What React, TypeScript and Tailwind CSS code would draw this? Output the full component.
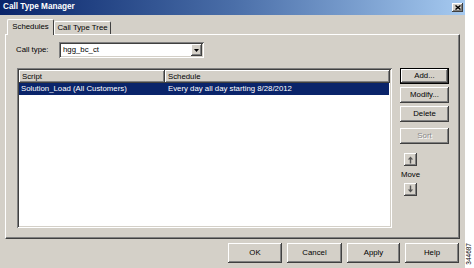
import React from "react";

const raised =
  "shadow-[inset_-1px_-1px_#404040,inset_1px_1px_#ffffff,inset_-2px_-2px_#808080,inset_2px_2px_#d4d0c8]";
const sunken =
  "shadow-[inset_1px_1px_#808080,inset_-1px_-1px_#ffffff,inset_2px_2px_#404040,inset_-2px_-2px_#d4d0c8]";

function Btn({
  label,
  w = "w-[49px]",
  h = "h-[16px]",
  disabled = false,
  def = false,
}: {
  label: string;
  w?: string;
  h?: string;
  disabled?: boolean;
  def?: boolean;
}) {
  return (
    <div
      className={`${w} ${h} bg-[#d4d0c8] flex items-center justify-center ${
        def
          ? "border border-black shadow-[inset_-1px_-1px_#404040,inset_1px_1px_#ffffff,inset_-2px_-2px_#808080]"
          : raised
      } ${disabled ? "text-[#8a8a8a] [text-shadow:1px_1px_#ffffff]" : "text-black"}`}
    >
      {label}
    </div>
  );
}

function ArrowBtn({ up }: { up: boolean }) {
  return (
    <div className={`w-[13px] h-[13px] bg-[#d4d0c8] flex items-center justify-center ${raised}`}>
      <svg width="7" height="8" viewBox="0 0 7 8">
        {up ? (
          <path d="M3.5 0.5 L0.8 3.6 H2.8 V7.5 H4.2 V3.6 H6.2 Z" fill="#555" />
        ) : (
          <path d="M3.5 7.5 L0.8 4.4 H2.8 V0.5 H4.2 V4.4 H6.2 Z" fill="#555" />
        )}
      </svg>
    </div>
  );
}

export default function App() {
  return (
    <div
      className="w-[474px] h-[268px] bg-white flex overflow-hidden text-[7.8px] leading-none text-black"
      style={{ fontFamily: '"Liberation Sans", Arial, sans-serif' }}
    >
      <div className="w-[465px] h-full bg-[#d4d0c8] flex flex-col">
        {/* Title bar */}
        <div className="h-[15px] bg-linear-to-r from-[#0a246a] via-[#4a6ea8] to-[#a6caf0] flex items-center justify-between pl-[3px] pr-[2px] shrink-0">
          <span className="text-white font-bold text-[8.2px]">Call Type Manager</span>
          <div className={`w-[11px] h-[9px] bg-[#d4d0c8] flex items-center justify-center ${raised}`}>
            <svg width="6" height="5" viewBox="0 0 6 5">
              <path d="M0.5 0.5 L5.5 4.5 M5.5 0.5 L0.5 4.5" stroke="#000" strokeWidth="1.4" />
            </svg>
          </div>
        </div>

        <div className="flex flex-col px-[5px] pt-[4px]">
          {/* Tabs */}
          <div className="h-[15px] flex items-end pl-[2px]">
            <div className="relative z-10 -mb-px h-[16px] w-[47px] bg-[#d4d0c8] border-t border-l border-white border-r border-r-[#404040] rounded-t-[2px] flex items-center justify-center pb-[1px]">
              Schedules
            </div>
            <div className="h-[13px] w-[57px] bg-[#d4d0c8] border-t border-l border-white border-r border-r-[#404040] rounded-t-[2px] flex items-center justify-center">
              Call Type Tree
            </div>
          </div>

          {/* Panel */}
          <div className="h-[205px] border-t border-l border-white border-b border-r border-b-[#404040] border-r-[#404040] shadow-[inset_-1px_-1px_#808080] pt-[7px] pl-[10px] flex flex-col">
            <div className="flex items-center h-[16px]">
              <span className="w-[43px]">Call type:</span>
              <div className={`w-[145px] h-[16px] bg-white flex items-center pl-[4px] pr-[2px] ${sunken}`}>
                <span className="flex-1">hgg_bc_ct</span>
                <div className={`w-[11px] h-[12px] bg-[#d4d0c8] flex items-center justify-center ${raised}`}>
                  <svg width="5" height="3" viewBox="0 0 5 3">
                    <path d="M0 0 H5 L2.5 3 Z" fill="#000" />
                  </svg>
                </div>
              </div>
            </div>

            <div className="flex mt-[10px]">
              {/* List view */}
              <div className={`ml-[1px] w-[375px] h-[160px] bg-white p-[2px] flex flex-col ${sunken}`}>
                <div className="flex h-[13px]">
                  <div className={`w-[146px] h-full bg-[#d4d0c8] flex items-center pl-[3px] ${raised}`}>Script</div>
                  <div className={`flex-1 h-full bg-[#d4d0c8] flex items-center pl-[3px] ${raised}`}>Schedule</div>
                </div>
                <div className="flex h-[12px] bg-[#0a246a] text-white mr-[1px]">
                  <div className="w-[146px] flex items-center pl-[2px]">Solution_Load (All Customers)</div>
                  <div className="flex-1 flex items-center pl-[3px]">Every day all day starting 8/28/2012</div>
                </div>
              </div>

              {/* Side buttons */}
              <div className="ml-[8px] flex flex-col">
                <Btn label="Add..." def />
                <div className="mt-[3px]">
                  <Btn label="Modify..." />
                </div>
                <div className="mt-[3px]">
                  <Btn label="Delete" />
                </div>
                <div className="mt-[6px]">
                  <Btn label="Sort" disabled />
                </div>
                <div className="mt-[9px] w-[21px] flex flex-col items-center">
                  <ArrowBtn up />
                  <span className="mt-[5px] mb-[4px]">Move</span>
                  <ArrowBtn up={false} />
                </div>
              </div>
            </div>
          </div>

          {/* Bottom buttons */}
          <div className="flex justify-end gap-[5px] mt-[4px] pr-[1px]">
            <Btn label="OK" w="w-[54px]" h="h-[20px]" />
            <Btn label="Cancel" w="w-[55px]" h="h-[20px]" />
            <Btn label="Apply" w="w-[53px]" h="h-[20px]" />
            <Btn label="Help" w="w-[54px]" h="h-[20px]" />
          </div>
        </div>
      </div>

      {/* Figure number */}
      <div className="flex-1 flex flex-col justify-end items-center pb-[3px]">
        <span className="[writing-mode:vertical-rl] rotate-180 text-[6.5px] text-black">344687</span>
      </div>
    </div>
  );
}
